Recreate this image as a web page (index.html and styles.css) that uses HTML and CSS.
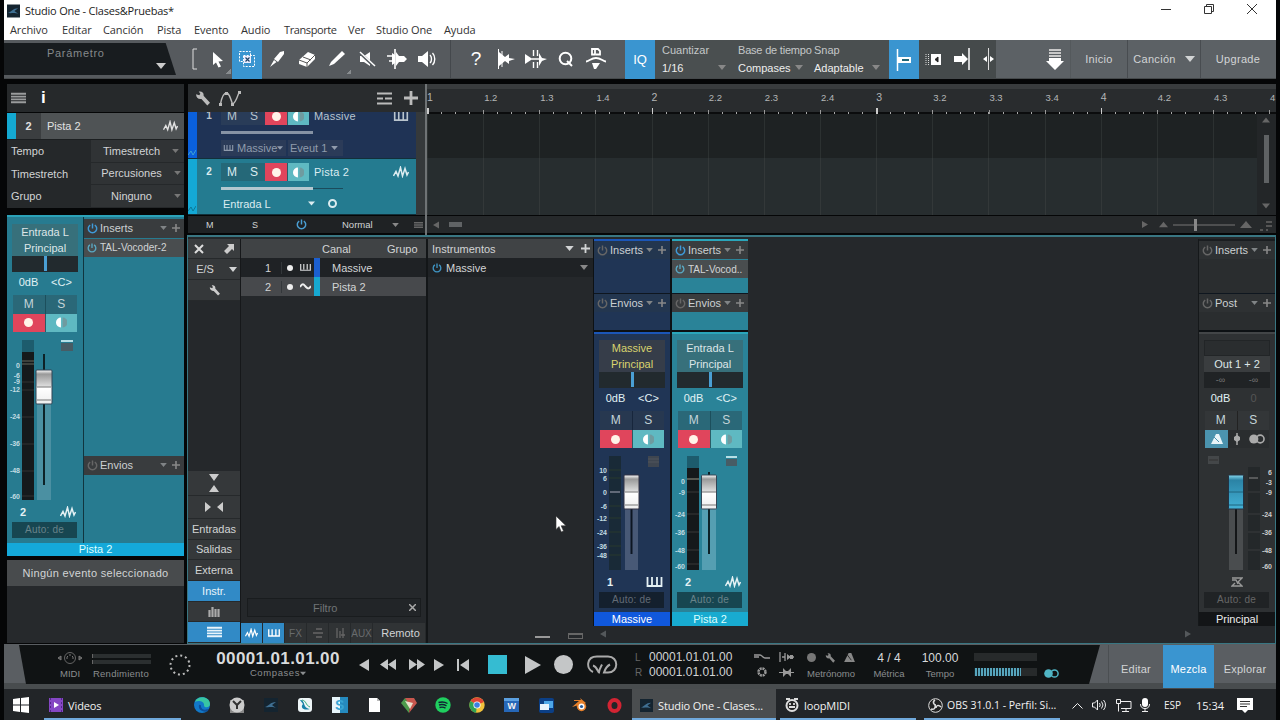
FILE: index.html
```html
<!DOCTYPE html>
<html lang="es">
<head>
    <meta charset="UTF-8">
    <meta name="viewport" content="width=device-width, initial-scale=1.0">
    <title>Studio One - Clases&amp;Pruebas*</title>
    <link rel="stylesheet" href="styles.css">
</head>
<body>
    <!-- shared icons -->
    <svg class="defs" width="0" height="0">
        <defs>
            <linearGradient id="cap" x1="0" y1="0" x2="0" y2="1">
                <stop offset="0" stop-color="#fff"/>
                <stop offset="0.12" stop-color="#999"/>
                <stop offset="0.48" stop-color="#ddd"/>
                <stop offset="0.52" stop-color="#fff"/>
                <stop offset="1" stop-color="#eee"/>
            </linearGradient>
            <linearGradient id="capBlue" x1="0" y1="0" x2="0" y2="1">
                <stop offset="0" stop-color="#8adcf0"/>
                <stop offset="0.15" stop-color="#2b83a5"/>
                <stop offset="1" stop-color="#43b1d6"/>
            </linearGradient>
        </defs>
        <symbol id="down" viewBox="0 0 10 6"><path d="M0 0h10L5 6z" fill="currentColor"/></symbol>
        <symbol id="up" viewBox="0 0 10 6"><path d="M0 6h10L5 0z" fill="currentColor"/></symbol>
        <symbol id="left" viewBox="0 0 10 12"><path d="M10 0v12L0 6z" fill="currentColor"/></symbol>
        <symbol id="right" viewBox="0 0 10 12"><path d="M0 0v12L10 6z" fill="currentColor"/></symbol>
        <symbol id="plus" viewBox="0 0 10 10"><path d="M5 0v10M0 5h10" stroke="currentColor" stroke-width="2"/></symbol>
        <symbol id="menu" viewBox="0 0 16 12"><path d="M0 1.5h16M0 4.5h16M0 7.5h16M0 10.5h16" stroke="currentColor" stroke-width="2"/></symbol>
        <symbol id="power" viewBox="0 0 12 12"><path d="M3.5 2.2a4.6 4.6 0 1 0 5 0M6 0.5v5.5" fill="none" stroke="currentColor" stroke-width="1.6"/></symbol>
        <symbol id="wave" viewBox="0 0 16 12"><path d="M0.500 10L3 5.500 5 10 7.500 1.500 9.500 10 12 2.500 14 9l1.500-3" fill="none" stroke="currentColor" stroke-width="1.500"/></symbol>
        <symbol id="keys" viewBox="0 0 16 10"><path d="M1 0v9h14V0M5.500 0v8M10.500 0v8" fill="none" stroke="currentColor" stroke-width="1.800"/></symbol>
        <symbol id="wrench" viewBox="0 0 14 14"><path d="M1 3l3 1 1-1.500L3.500 0.500c3-.6 5 1 4.500 4L14 11l-2.500 2.500L6 7.500C3 8 1 6 1 3z" fill="currentColor"/></symbol>
        <symbol id="half" viewBox="0 0 10 10"><path d="M4.500 0.500v9a4.500 4.500 0 0 1 0-9z" fill="#fff"/><path d="M6 .5v9a4.500 4.500 0 0 0 0-9z" fill="#6f9ba0"/></symbol>
        <symbol id="s1" viewBox="0 0 14 14"><path d="M0 0h14v14H0z" fill="#142430"/><path d="M1 9c4-1 5-5 11-5L8 7l4 3c-4-2-7 0-11-1z" fill="#3f6f92"/></symbol>
        <symbol id="stereo" viewBox="0 0 15 9"><circle cx="4.500" cy="4.500" r="4.300" fill="currentColor"/><circle cx="10.500" cy="4.500" r="3.600" fill="none" stroke="currentColor" stroke-width="1.500"/></symbol>
    </svg>

    <div class="app">
        <header class="titlebar">
            <svg width="13" height="14"><use href="#s1"/></svg>
            <span>Studio One - Clases&amp;Pruebas*</span>
            <div class="window-buttons">
                <svg width="10" height="10" viewBox="0 0 10 10"><path d="M0 5.500h10"/></svg>
                <svg width="10" height="10" viewBox="0 0 10 10"><path d="M.5 2.500h7v7h-7zM2.500 2.500v-2h7v7h-2"/></svg>
                <svg width="10" height="10" viewBox="0 0 10 10"><path d="M0 0l10 10M10 0L0 10"/></svg>
            </div>
        </header>
        <nav class="menubar">
            <span class="m1">Archivo</span><span class="m2">Editar</span><span class="m3">Canción</span><span class="m4">Pista</span><span class="m5">Evento</span><span class="m6">Audio</span><span class="m7">Transporte</span><span class="m8">Ver</span><span class="m9">Studio One</span><span>Ayuda</span>
        </nav>

        <!-- toolbar -->
        <div class="toolbar">
            <div class="param"><span>Parámetro</span><svg width="10" height="6"><use href="#down"/></svg></div>
            <div class="tools">
                <svg class="bracket" width="6" height="22" viewBox="0 0 6 22"><path d="M5 1H1v20h4" fill="none" stroke="#ddd"/></svg>
                <div class="tool corner"><svg width="18" height="20" viewBox="0 0 18 20"><path d="M5 3l10 9-4.500.5 2.500 5-2.500 1-2.500-5L5 16z" fill="#fff"/></svg></div>
                <div class="tool on"><svg width="18" height="18" viewBox="0 0 18 18"><path d="M1.500 1.500h11v10h-11zM5.500 5.500h11v11h-11z" fill="none" stroke="#fff" stroke-dasharray="2 1.200"/><path d="M6 6h7v7H6z" fill="#eef"/><path d="M7.500 7.500l4 4m0-4l-4 4" stroke="#246" stroke-width="1.200"/></svg></div>
                <div class="tool"><svg width="16" height="18" viewBox="0 0 16 18"><path d="M11 2l4-1v3l-6 8-4-3zM5 10l2.500 2L1 17z" fill="#fff"/></svg></div>
                <div class="tool"><svg width="18" height="16" viewBox="0 0 18 16"><path d="M1 9l9-8 7 3v4l-8 8-8-3z" fill="#fff"/><path d="M1 9l8 3 8-8M9 12v4M5 6l8 3" fill="none" stroke="#555"/></svg></div>
                <div class="tool corner"><svg width="16" height="16" viewBox="0 0 16 16"><path d="M13 0l3 3L5 13 0 15l2-4z" fill="#fff"/></svg></div>
                <div class="tool"><svg width="18" height="17" viewBox="0 0 18 17"><path d="M2 5h4l6-4v14l-6-4H2z" fill="#fff"/><path d="M1 1l16 15" stroke="#555a5f" stroke-width="3"/><path d="M2 1l15 14" stroke="#fff" stroke-width="1.500"/></svg></div>
                <div class="tool"><svg width="20" height="22" viewBox="0 0 20 22"><path d="M0 8h5M2 13h4M8 1v20" stroke="#fff" stroke-width="1.600"/><path d="M5 5l3 2v8l-3 2zM9 4l3 4h5l3 3-3 3h-5l-3 4z" fill="#fff"/></svg></div>
                <div class="tool"><svg width="18" height="16" viewBox="0 0 18 16"><path d="M0 5h4l6-5v16l-6-5H0z" fill="#fff"/><path d="M12 4c2 2 2 6 0 8M14.500 2c3 3 3 9 0 12" fill="none" stroke="#fff" stroke-width="1.400"/></svg></div>
            </div>
            <div class="tools second">
                <div class="tool help">?</div>
                <div class="tool"><svg width="18" height="20" viewBox="0 0 18 20"><path d="M1.500 0v20M5 2v16" stroke="#fff"/><path d="M2 3l6 5 4-3v4l6 1-6 2v3l-4-3-6 5z" fill="#fff"/></svg></div>
                <div class="tool"><svg width="22" height="18" viewBox="0 0 22 18"><path d="M0 4l6 4v2l-6 4zM14 3l3 5 5 1-5 2-3 5z" fill="#fff"/><path d="M6 9h9M8.500 0v6M12.500 0v6M8.500 12v6M12.500 12v6" stroke="#fff" stroke-width="1.400"/></svg></div>
                <div class="tool"><svg width="16" height="16" viewBox="0 0 16 16"><circle cx="7.500" cy="7.500" r="5.800" fill="none" stroke="#fff" stroke-width="2"/><path d="M9 10l5 5" stroke="#fff" stroke-width="2"/></svg></div>
                <div class="tool"><svg width="22" height="22" viewBox="0 0 22 22"><path d="M7 6.500V1h3v5.500zM10 1h3l2 2v3.500h-4M1 13.500c3 0 5-3.500 10-3.500s7 3.500 10 3.500" fill="none" stroke="#fff" stroke-width="1.800"/><path d="M7 15h8l-4 6H9z" fill="#fff"/></svg></div>
            </div>
            <div class="tool on iq">IQ</div>
            <div class="quant">
                <div class="q1"><label>Cuantizar</label><p>1/16<svg width="8" height="5"><use href="#down"/></svg></p></div>
                <div class="q2"><label>Base de tiempo</label><p>Compases<svg width="8" height="5"><use href="#down"/></svg></p></div>
                <div class="q3"><label>Snap</label><p>Adaptable<svg width="8" height="5"><use href="#down"/></svg></p></div>
            </div>
            <div class="tool on"><svg width="16" height="22" viewBox="0 0 16 22"><path d="M1.500 0v22" stroke="#fff" stroke-width="1.500"/><path d="M2 8h13v6H2z" fill="#fff"/><path d="M6 10h7v2H6z" fill="#267"/></svg></div>
            <div class="snaps">
                <svg width="16" height="13" viewBox="0 0 16 13"><path d="M1 1v11M3.500 1v11" stroke="#ddd" stroke-dasharray="1 1"/><path d="M6 1h10v11H6z" fill="#fff"/><path d="M13 4v5l-3-2.500z" fill="#222" stroke="#222"/></svg>
                <svg width="16" height="22" viewBox="0 0 16 22"><path d="M0 8h8V5l6 6-6 6v-3H0z" fill="#fff"/><path d="M15 0v22" stroke="#fff" stroke-width="1.500"/></svg>
                <svg width="11" height="22" viewBox="0 0 11 22"><path d="M5.500 0v22" stroke="#ddd"/><path d="M4 8v6l-4-3zM7 8v6l4-3z" fill="#fff"/></svg>
            </div>
            <div class="pages">
                <div class="drop"><svg width="18" height="21" viewBox="0 0 18 21"><path d="M3 1h12M3 4h12M3 7h12" stroke="#c8c8c8" stroke-width="2"/><path d="M3 9h12v3h3l-9 9-9-9h3z" fill="#fff"/></svg></div>
                <div class="page p1">Inicio</div>
                <div class="page p2">Canción<svg width="10" height="6"><use href="#down"/></svg></div>
                <div class="page p3">Upgrade</div>
            </div>
        </div>

        <div class="main">
            <!-- inspector -->
            <aside class="inspector">
                <div class="insp-head"><svg width="15" height="12"><use href="#menu"/></svg><b>i</b></div>
                <div class="insp-track"><i></i><b>2</b><span>Pista 2</span><svg width="15" height="12"><use href="#wave"/></svg></div>
                <div class="insp-row"><label>Tempo</label><p>Timestretch<svg width="7" height="4"><use href="#down"/></svg></p></div>
                <div class="insp-row"><label>Timestretch</label><p>Percusiones<svg width="7" height="4"><use href="#down"/></svg></p></div>
                <div class="insp-row"><label>Grupo</label><p>Ninguno<svg width="7" height="4"><use href="#down"/></svg></p></div>
                <div class="insp-channel">
                    <div class="strip-body">
                        <div class="route"><span>Entrada L</span><span>Principal</span></div>
                        <div class="pan"><i></i></div>
                        <div class="vals"><span>0dB</span><span>&lt;C&gt;</span></div>
                        <div class="ms"><span>M</span><span>S</span></div>
                        <div class="arm"><span class="rec"><i></i></span><span class="mon"><svg width="11" height="11"><use href="#half"/></svg></span></div>
                        <svg class="fader" width="76" height="171" viewBox="0 0 76 171">
                            <path d="M15 8h12v12H15z" fill="#1d5c6d"/><path d="M15 20h12v148H15z" fill="#15191b"/>
                            <path d="M15 29h12M15 32h12" stroke="#8a8a7a" stroke-width=".7"/>
                            <path d="M15 50h12M15 58h12M15 85h12M15 112h12M15 139h12M15 164h12" stroke="#333"/>
                            <path d="M30 72h14v96H30z" fill="#4b90a2"/><path d="M37 22v131" stroke="#0d2227" stroke-width="2"/>
                            <rect x="29" y="38" width="16" height="34" rx="1" fill="url(#cap)" stroke="#345"/><path d="M30 55h14M30 68h14" stroke="#777"/>
                            <path d="M54 11h12v8H54z" fill="#475c65"/><path d="M54 9h12" stroke="#b5dfe6" stroke-width="2"/>
                            <g class="scale"><text x="13" y="36">0</text><text x="13" y="46">-6</text><text x="13" y="52">-9</text><text x="13" y="60">-12</text><text x="13" y="87">-24</text><text x="13" y="114">-36</text><text x="13" y="141">-48</text><text x="13" y="167">-60</text></g>
                        </svg>
                        <div class="num"><b>2</b><svg width="16" height="12"><use href="#wave"/></svg></div>
                        <div class="auto">Auto: de</div>
                    </div>
                    <div class="fx">
                        <div class="fx-head on"><svg width="11" height="11"><use href="#power"/></svg><span>Inserts</span><svg width="7" height="4"><use href="#down"/></svg><svg width="8" height="8"><use href="#plus"/></svg></div>
                        <div class="fx-slot"><svg width="10" height="10"><use href="#power"/></svg><span>TAL-Vocoder-2</span></div>
                        <div class="fx-head sends"><svg width="11" height="11"><use href="#power"/></svg><span>Envios</span><svg width="7" height="4"><use href="#down"/></svg><svg width="8" height="8"><use href="#plus"/></svg></div>
                    </div>
                </div>
                <div class="insp-name">Pista 2</div>
                <div class="insp-event">Ningún evento seleccionado</div>
                <div class="insp-empty"></div>
            </aside>

            <div class="work">
                <!-- track list and timeline -->
                <section class="arrange">
                    <div class="tracks">
                        <div class="tracks-head">
                            <svg width="15" height="15"><use href="#wrench"/></svg>
                            <svg width="22" height="15" viewBox="0 0 22 15"><path d="M1.500 13C3 5 5 2 7.500 2s4 5 6 11C16 13 18 7 20 1.500" fill="none" stroke="#bbb" stroke-width="1.400"/><path d="M0 12h3v3H0zM19 0h3v3h-3zM6 1h3v3H6zM12 12h3v3h-3z" fill="#bbb"/></svg>
                            <svg class="push" width="15" height="13" viewBox="0 0 15 13"><path d="M0 1.500h15M0 6.500h6M8 6.500h7M0 11.500h15" stroke="#bbb" stroke-width="2"/></svg>
                            <svg width="14" height="14"><use href="#plus"/></svg>
                        </div>
                        <div class="track-view">
                            <div class="track midi">
                                <div class="color"><svg width="8" height="7" viewBox="0 0 8 7"><path d="M0 6l3-4 2 4 3-5" fill="none" stroke="#3fa0d0"/></svg></div>
                                <b>1</b>
                                <div class="track-body">
                                    <div class="track-top"><div class="btns"><span>M</span><span>S</span><span class="rec"><i></i></span><span class="mon"><svg width="11" height="11"><use href="#half"/></svg></span></div><span class="name">Massive</span><svg width="16" height="9"><use href="#keys"/></svg></div>
                                    <div class="rail"><i></i></div>
                                    <div class="track-in"><p class="in1"><svg width="11" height="6"><use href="#keys"/></svg><span>Massive</span><svg width="6" height="4"><use href="#down"/></svg></p><p class="in2"><span>Eveut 1</span><svg width="7" height="4"><use href="#down"/></svg></p></div>
                                </div>
                            </div>
                            <div class="track audio">
                                <div class="color"><svg width="8" height="7" viewBox="0 0 8 7"><path d="M0 6l3-4 2 4 3-5" fill="none" stroke="#0d7896"/></svg></div>
                                <b>2</b>
                                <div class="track-body">
                                    <div class="track-top"><div class="btns"><span>M</span><span>S</span><span class="rec"><i></i></span><span class="mon"><svg width="11" height="11"><use href="#half"/></svg></span></div><span class="name">Pista 2</span><svg width="16" height="12"><use href="#wave"/></svg></div>
                                    <div class="rail"><i></i></div>
                                    <div class="track-in"><p class="in3"><span>Entrada L</span><svg width="7" height="5"><use href="#down"/></svg></p><i class="ring"></i></div>
                                </div>
                            </div>
                        </div>
                        <div class="tracks-foot"><span>M</span><span>S</span><svg width="11" height="11"><use href="#power"/></svg><span class="mode">Normal</span><svg width="7" height="4"><use href="#down"/></svg><svg width="9" height="8"><use href="#menu"/></svg></div>
                    </div>
                    <div class="timeline">
                        <div class="ruler">
                            <div class="marks"><b>1</b><span>1.2</span><span>1.3</span><span>1.4</span><b>2</b><span>2.2</span><span>2.3</span><span>2.4</span><b>3</b><span>3.2</span><span>3.3</span><span>3.4</span><b>4</b><span>4.2</span><span>4.3</span><span>4</span></div>
                            <div class="ticks"></div>
                        </div>
                        <div class="lanes-row">
                            <div class="lanes"><div class="lane l1"></div><div class="lane l2"></div></div>
                            <div class="vscroll"><svg width="8" height="6"><use href="#up"/></svg><i></i><svg width="8" height="6"><use href="#down"/></svg></div>
                        </div>
                        <div class="hscroll">
                            <svg width="6" height="8"><use href="#left"/></svg><i class="thumb"></i>
                            <svg class="push" width="6" height="9"><use href="#right"/></svg>
                            <svg class="z1" width="9" height="7"><use href="#up"/></svg>
                            <svg width="62" height="12" viewBox="0 0 62 12"><path d="M0 6h62" stroke="#777"/><path d="M22.500 0v12" stroke="#888" stroke-width="3"/></svg>
                            <svg width="12" height="9"><use href="#up"/></svg>
                            <svg width="12" height="12" viewBox="0 0 12 12"><path d="M0 11h3M6 3h6M6 7h6M6 11h2" stroke="#555" stroke-width="2"/></svg>
                        </div>
                    </div>
                </section>

                <!-- console -->
                <section class="console">
                    <div class="con-tools">
                        <div class="ct head"><svg width="10" height="10" viewBox="0 0 10 10"><path d="M1 1l8 8M9 1L1 9" stroke="#ddd" stroke-width="2"/></svg><svg width="10" height="10" viewBox="0 0 10 10"><path d="M3 0h7v7L8 5l-5 5-3-3 5-5z" fill="#ccc"/></svg></div>
                        <div class="ct io"><span>E/S</span><svg width="8" height="5"><use href="#down"/></svg></div>
                        <div class="ct wr"><svg width="11" height="11"><use href="#wrench"/></svg></div>
                        <div class="fill"></div>
                        <div class="ct tall"><svg width="10" height="18" viewBox="0 0 10 18"><path d="M0 0h10L5 7zM0 18h10L5 11z" fill="#ccc"/></svg></div>
                        <div class="ct mid"><svg width="18" height="10" viewBox="0 0 18 10"><path d="M0 0v10l6-5zM18 0v10l-6-5z" fill="#ccc"/></svg></div>
                        <div class="ct">Entradas</div>
                        <div class="ct">Salidas</div>
                        <div class="ct">Externa</div>
                        <div class="ct on">Instr.</div>
                        <div class="ct"><svg width="12" height="11" viewBox="0 0 12 11"><path d="M1.500 4v7M4.500 1v10M7.500 3v8M10.500 3v8" stroke="#aaa" stroke-width="2.200"/></svg></div>
                        <div class="ct on"><svg width="15" height="12"><use href="#menu"/></svg></div>
                    </div>
                    <div class="chan-list">
                        <div class="cl-head"><span class="c1">Canal</span><span>Grupo</span></div>
                        <div class="cl-row"><span class="n">1</span><i class="dot"></i><svg width="11" height="7"><use href="#keys"/></svg><i class="sw blue"></i><span>Massive</span></div>
                        <div class="cl-row sel"><span class="n">2</span><i class="dot"></i><svg width="11" height="7" viewBox="0 0 11 7"><path d="M0 4C3-1 4 2 6 4s3 2 5-1" fill="none" stroke="#eee" stroke-width="2"/></svg><i class="sw cyan"></i><span>Pista 2</span></div>
                        <div class="fill"></div>
                        <div class="filter"><span>Filtro</span><svg width="7" height="7" viewBox="0 0 7 7"><path d="M0 0l7 7M7 0L0 7" stroke="#aaa" stroke-width="1.500"/></svg></div>
                        <div class="kinds">
                            <span class="on"><svg width="13" height="10"><use href="#wave"/></svg></span><span class="on"><svg width="12" height="8"><use href="#keys"/></svg></span><span>FX</span>
                            <span><svg width="10" height="10" viewBox="0 0 10 10"><path d="M0 5h10M3 1h6M3 9h6" stroke="#666" stroke-width="1.300"/></svg></span>
                            <span><svg width="10" height="10" viewBox="0 0 10 10"><path d="M2 0v10M5 3v7M8 0v10M6 7h4" stroke="#666" stroke-width="1.300"/></svg></span>
                            <span>AUX</span><span class="remote">Remoto</span>
                        </div>
                    </div>
                    <div class="instruments">
                        <div class="in-head"><span>Instrumentos</span><svg width="9" height="5"><use href="#down"/></svg><svg width="9" height="9"><use href="#plus"/></svg></div>
                        <div class="in-row"><svg width="10" height="10"><use href="#power"/></svg><span>Massive</span><svg width="8" height="5"><use href="#down"/></svg></div>
                        <div class="fill"></div>
                        <div class="in-foot"><i></i><em></em></div>
                    </div>
                    <div class="mixer">
                        <div class="strips">
                            <div class="strip blue">
                                <div class="fx">
                                    <div class="fx-head"><svg width="11" height="11"><use href="#power"/></svg><span>Inserts</span><svg width="7" height="4"><use href="#down"/></svg><svg width="8" height="8"><use href="#plus"/></svg></div>
                                    <div class="fx-head sends"><svg width="11" height="11"><use href="#power"/></svg><span>Envios</span><svg width="7" height="4"><use href="#down"/></svg><svg width="8" height="8"><use href="#plus"/></svg></div>
                                </div>
                                <div class="strip-body">
                                    <div class="route"><span>Massive</span><span>Principal</span></div>
                                    <div class="pan"><i></i></div>
                                    <div class="vals"><span>0dB</span><span>&lt;C&gt;</span></div>
                                    <div class="ms"><span>M</span><span>S</span></div>
                                    <div class="arm"><span class="rec"><i></i></span><span class="mon"><svg width="11" height="11"><use href="#half"/></svg></span></div>
                                    <svg class="fader" width="76" height="125" viewBox="0 0 76 125">
                                        <path d="M15 8h12v114H15z" fill="#192a37"/>
                                        <path d="M15 22h12M15 30h12M15 58h12M15 70h12M15 84h12M15 98h12M15 107h12" stroke="#28392f"/><path d="M16 44h10" stroke="#aab"/>
                                        <path d="M31 61h13v61H31z" fill="#485976"/><path d="M37.500 58v48" stroke="#0d1622" stroke-width="2"/>
                                        <rect x="30" y="27" width="15" height="34" rx="1" fill="url(#cap)" stroke="#334"/><path d="M31 44h13M31 57h13" stroke="#777"/>
                                        <path d="M54 8h11v11H54z" fill="#3f4650"/><path d="M54 11h11M54 14h11" stroke="#50555c"/>
                                        <g class="scale"><text x="13" y="25">10</text><text x="13" y="33">6</text><text x="13" y="47">0</text><text x="13" y="61">-6</text><text x="13" y="73">-12</text><text x="13" y="87">-24</text><text x="13" y="101">-36</text><text x="13" y="110">-48</text></g>
                                    </svg>
                                    <div class="num"><b>1</b><svg width="17" height="10"><use href="#keys"/></svg></div>
                                    <div class="auto">Auto: de</div>
                                </div>
                                <div class="strip-name">Massive</div>
                            </div>
                            <div class="strip teal">
                                <div class="fx">
                                    <div class="fx-head on"><svg width="11" height="11"><use href="#power"/></svg><span>Inserts</span><svg width="7" height="4"><use href="#down"/></svg><svg width="8" height="8"><use href="#plus"/></svg></div>
                                    <div class="fx-slot"><svg width="10" height="10"><use href="#power"/></svg><span>TAL-Vocod..</span></div>
                                    <div class="fx-head sends"><svg width="11" height="11"><use href="#power"/></svg><span>Envios</span><svg width="7" height="4"><use href="#down"/></svg><svg width="8" height="8"><use href="#plus"/></svg></div>
                                </div>
                                <div class="strip-body">
                                    <div class="route"><span>Entrada L</span><span>Principal</span></div>
                                    <div class="pan"><i></i></div>
                                    <div class="vals"><span>0dB</span><span>&lt;C&gt;</span></div>
                                    <div class="ms"><span>M</span><span>S</span></div>
                                    <div class="arm"><span class="rec"><i></i></span><span class="mon"><svg width="11" height="11"><use href="#half"/></svg></span></div>
                                    <svg class="fader" width="76" height="125" viewBox="0 0 76 125">
                                        <path d="M15 8h12v12H15z" fill="#1d5c6d"/><path d="M15 20h12v102H15z" fill="#15191b"/>
                                        <path d="M15 31h12" stroke="#9a9a8a"/><path d="M15 44h12M15 66h12M15 84h12M15 102h12M15 116h12" stroke="#393939"/>
                                        <path d="M30 61h14v61H30z" fill="#559fb2"/><path d="M37 24v82" stroke="#0d2227" stroke-width="2"/>
                                        <rect x="29.500" y="27" width="15" height="34" rx="1" fill="url(#cap)" stroke="#345"/><path d="M30 44h14M30 57h14" stroke="#777"/>
                                        <path d="M54 11h11v7H54z" fill="#475c65"/><path d="M54 9h11" stroke="#b5dfe6" stroke-width="2"/>
                                        <g class="scale"><text x="13" y="36">0</text><text x="13" y="47">-9</text><text x="13" y="69">-24</text><text x="13" y="87">-36</text><text x="13" y="105">-48</text><text x="13" y="121">-60</text></g>
                                    </svg>
                                    <div class="num"><b>2</b><svg width="16" height="12"><use href="#wave"/></svg></div>
                                    <div class="auto">Auto: de</div>
                                </div>
                                <div class="strip-name">Pista 2</div>
                            </div>
                            <div class="fill"></div>
                            <div class="strip master">
                                <div class="fx">
                                    <div class="fx-head"><svg width="11" height="11"><use href="#power"/></svg><span>Inserts</span><svg width="7" height="4"><use href="#down"/></svg><svg width="8" height="8"><use href="#plus"/></svg></div>
                                    <div class="fx-head sends"><svg width="11" height="11"><use href="#power"/></svg><span>Post</span><svg width="7" height="4"><use href="#down"/></svg><svg width="8" height="8"><use href="#plus"/></svg></div>
                                </div>
                                <div class="strip-body">
                                    <div class="route"><span></span><span>Out 1 + 2</span></div>
                                    <div class="pan peaks"><span>-∞</span><span>-∞</span></div>
                                    <div class="vals"><span>0dB</span><span class="dim">0</span></div>
                                    <div class="ms"><span>M</span><span>S</span></div>
                                    <div class="arm">
                                        <span class="metro"><svg width="12" height="10" viewBox="0 0 12 10"><path d="M5 0h3l4 10H0z" fill="#e8f4f8"/><path d="M1 1l7 7" stroke="#4d93ad"/></svg></span>
                                        <span class="pin"><svg width="6" height="12" viewBox="0 0 6 12"><path d="M3 0v12" stroke="#aaa" stroke-width="1.500"/><path d="M0 4l3-2 3 2v3L3 9 0 7z" fill="#aaa"/></svg></span>
                                        <span><svg width="16" height="10"><use href="#stereo"/></svg></span>
                                    </div>
                                    <svg class="fader" width="76" height="125" viewBox="0 0 76 125">
                                        <path d="M9 8h11v8H9z" fill="#444749"/><path d="M10 12h9" stroke="#333"/>
                                        <path d="M49 19h12v103H49z" fill="#24282a"/><path d="M49 44h12M49 66h12M49 84h12M49 102h12" stroke="#383b3d"/><path d="M50 30h9" stroke="#888"/>
                                        <path d="M30 61h14v61H30z" fill="#4a4d4f"/><path d="M37 61v45" stroke="#141618" stroke-width="2"/>
                                        <rect x="29.500" y="27" width="15" height="34" rx="1" fill="url(#capBlue)" stroke="#234"/><path d="M30 44h14M30 57h14" stroke="#1f647e"/>
                                        <g class="scale"><text x="73" y="27">6</text><text x="73" y="37">-3</text><text x="73" y="47">-9</text><text x="73" y="69">-24</text><text x="73" y="87">-36</text><text x="73" y="105">-48</text><text x="73" y="121">-60</text></g>
                                    </svg>
                                    <div class="num mid"><svg width="12" height="10" viewBox="0 0 12 10"><path d="M1 1h10L7 5l4 4H1l3-3M1 3h4l2 4" fill="none" stroke="#999" stroke-width="1.300"/></svg></div>
                                    <div class="auto">Auto: de</div>
                                </div>
                                <div class="strip-name">Principal</div>
                            </div>
                        </div>
                        <div class="mix-scroll"><svg width="6" height="8"><use href="#left"/></svg><svg width="6" height="8"><use href="#right"/></svg></div>
                    </div>
                </section>
            </div>
        </div>

        <!-- transport -->
        <div class="transport">
            <div class="tp">
                <div class="midi"><svg width="24" height="14" viewBox="0 0 24 14"><circle cx="12" cy="7" r="5.500" fill="none" stroke="#666"/><path d="M8 7h2M14 7h2M12 3v2M9 5l1 1M15 5l-1 1M3 5v4L0 7zM21 5v4l3-2z" fill="#555" stroke="#777"/></svg><span>MIDI</span></div>
                <div class="perf"><i></i><i></i><span>Rendimiento</span></div>
                <svg class="spin" width="22" height="22" viewBox="0 0 22 22"><circle cx="11" cy="11" r="9.500" fill="none" stroke="#bbb" stroke-width="2" stroke-dasharray="2 2.970"/></svg>
                <div class="time"><b>00001.01.01.00</b><span>Compases<svg width="6" height="5"><use href="#down"/></svg></span></div>
                <div class="ctl">
                    <svg class="k1" width="10" height="12"><use href="#left"/></svg>
                    <svg class="k2" width="16" height="11" viewBox="0 0 16 11"><path d="M8 0v11L0 5.500zM16 0v11L8 5.500z"/></svg>
                    <svg class="k3" width="16" height="11" viewBox="0 0 16 11"><path d="M0 0v11l8-5.500zM8 0v11l8-5.500z"/></svg>
                    <svg class="k4" width="10" height="12"><use href="#right"/></svg>
                    <svg class="k5" width="12" height="12" viewBox="0 0 12 12"><path d="M0 0h2v12H0zM12 0v12L3 6z"/></svg>
                    <svg class="k6" width="19" height="19" viewBox="0 0 19 19"><path d="M0 0h19v19H0z" fill="#35bcd2"/></svg>
                    <svg class="k7" width="16" height="18" viewBox="0 0 16 18"><path d="M0 0v18l16-9z"/></svg>
                    <svg class="k8" width="19" height="19" viewBox="0 0 19 19"><circle cx="9.500" cy="9.500" r="9.500"/></svg>
                    <svg width="31" height="20" viewBox="0 0 31 20"><path d="M6 17C-1 14-1 1.500 10 1.500h11c11 0 11 16 0 16h-4c1-3 2-6 6-8M6 10.500c4 1 5 7 6 7 0-3 2-6 3-8" fill="none" stroke="#aaa" stroke-width="2"/></svg>
                </div>
                <div class="loc"><p><em>L</em>00001.01.01.00</p><p><em>R</em>00001.01.01.00</p></div>
                <div class="opts">
                    <svg width="16" height="8" viewBox="0 0 16 8"><path d="M0 2h6c2 0 3 3 5 3h5M0 4h5" fill="none" stroke="#999" stroke-width="1.300"/></svg>
                    <svg width="15" height="10" viewBox="0 0 15 10"><path d="M1 0v10M3 5h3M6 1v8M8 5h7" stroke="#999" stroke-width="1.300"/><path d="M8 2l4 3-4 3zM11 3h3v4h-3z" fill="#999"/></svg>
                    <svg width="12" height="10" viewBox="0 0 12 10"><circle cx="6" cy="5" r="3.500" fill="none" stroke="#999" stroke-width="2.500" stroke-dasharray="2 .75"/></svg>
                    <svg width="15" height="9" viewBox="0 0 15 9"><path d="M0 4.500h15" stroke="#999"/><path d="M4 0l3 3h2l3-3v9L9 6H7L4 9z" fill="#999"/></svg>
                </div>
                <div class="metro-box"><div><svg width="9" height="9" viewBox="0 0 9 9"><circle cx="4.500" cy="4.500" r="4.500" fill="#777"/></svg><svg width="10" height="10"><use href="#wrench"/></svg><svg width="11" height="9" viewBox="0 0 12 10"><path d="M5 0h3l4 10H0z" fill="#888"/><path d="M2 0l6 8" stroke="#222"/></svg></div><span>Metrónomo</span></div>
                <div class="val v1"><b>4 / 4</b><span>Métrica</span></div>
                <div class="val v2"><b>100.00</b><span>Tempo</span></div>
                <div class="levels"><i></i><em></em></div>
                <svg class="st" width="15" height="9"><use href="#stereo"/></svg>
            </div>
            <div class="views"><span class="e1">Editar</span><span class="e2">Mezcla</span><span class="e3">Explorar</span></div>
        </div>

        <!-- windows taskbar -->
        <footer class="taskbar">
            <svg class="win" width="16" height="16" viewBox="0 0 16 16"><path d="M0 2l7-1v6.500H0zM8 1l8-1v7.500H8zM0 8.500h7V15l-7-1zM8 8.500h8V16l-8-1z" fill="#fff"/></svg>
            <div class="task videos"><svg width="14" height="14" viewBox="0 0 14 14"><path d="M0 0h14v14H0z" fill="#8547c4"/><path d="M5 4v6l5-3z" fill="#fff"/><path d="M1.500 0v14M12.500 0v14" stroke="#54258c" stroke-dasharray="2 2"/></svg><span>Videos</span></div>
            <div class="quick">
                <span><svg width="16" height="16" viewBox="0 0 16 16"><circle cx="8" cy="8" r="8" fill="#1278c8"/><path d="M1 5C3-2 16-1 16 7c0 4-5 4-6 2 1-5-6-6-9-4z" fill="#38c6a3"/><path d="M6 8c-1 4 3 7 8 5" fill="none" stroke="#0c4f9a" stroke-width="2"/></svg></span>
                <span><svg width="16" height="16" viewBox="0 0 16 16"><path d="M1 3h14v13H1z" fill="#888"/><circle cx="8" cy="8" r="7.500" fill="#ccc"/><path d="M4 4l4 4 4-4M8 8v4" fill="none" stroke="#333" stroke-width="2"/></svg></span>
                <span><svg width="14" height="14"><use href="#s1"/></svg></span>
                <span><svg width="14" height="14" viewBox="0 0 14 14"><rect width="14" height="14" rx="3" fill="#eef5f7"/><path d="M2 2c6 0 2 8 10 9-7 2-10-2-7-5z" fill="#1681a8"/><path d="M4 2c5 1 3 5 8 7" stroke="#3a7" fill="none"/></svg></span>
                <span class="sb">S</span>
                <span><svg width="11" height="14" viewBox="0 0 11 14"><path d="M0 0h8l3 3v11H0z" fill="#fff"/><path d="M8 0v3h3" fill="#bbb"/></svg></span>
                <span><svg width="16" height="15" viewBox="0 0 16 15"><path d="M0 5l4-5 5 7-1 8z" fill="#4d9a4c"/><path d="M4 0h9l3 5-8 10 1-7z" fill="#c8574e"/><path d="M4 3l5 8 3-6z" fill="#e8e0cc"/></svg></span>
                <span><svg width="16" height="16" viewBox="0 0 16 16"><circle cx="8" cy="8" r="7.700" fill="#1fcf5f"/><path d="M3.500 5.500q5-1.500 9 1M4 8q4-1.200 7.500.8M4.500 10.500q3.500-1 6 .7" fill="none" stroke="#123" stroke-width="1.400"/></svg></span>
                <span><svg width="16" height="16" viewBox="0 0 16 16"><circle cx="8" cy="8" r="7.700" fill="#f2c23b"/><path d="M8 8L1.500 4A7.700 7.700 0 0 1 15 5z" fill="#df4637"/><path d="M8 8L1.500 4A7.700 7.700 0 0 0 7 15.700z" fill="#31a254"/><circle cx="8" cy="8" r="3.600" fill="#fff"/><circle cx="8" cy="8" r="2.800" fill="#3d7fe0"/></svg></span>
                <span class="wd"><i>W</i></span>
                <span><svg width="15" height="15" viewBox="0 0 15 15"><rect width="15" height="15" rx="2" fill="#0b3f86"/><path d="M5 3h9v7H5z" fill="#4ea7e8"/><path d="M1 6h9v6H1z" fill="#e8f2fb"/></svg></span>
                <span><svg width="16" height="14" viewBox="0 0 16 14"><path d="M0 9l7-6H2V2h7l-1-2 6 5z" fill="#e8812b"/><circle cx="9.500" cy="8.500" r="4.700" fill="#e8812b"/><circle cx="9.500" cy="8.500" r="3" fill="#fff"/><circle cx="9.500" cy="8.500" r="1.600" fill="#2a5c9a"/></svg></span>
                <span><svg width="15" height="15" viewBox="0 0 15 15"><ellipse cx="7.500" cy="7.500" rx="5" ry="5.500" fill="none" stroke="#d22433" stroke-width="4"/></svg></span>
            </div>
            <div class="task studio"><svg width="13" height="13"><use href="#s1"/></svg><span>Studio One - Clases...</span></div>
            <div class="task loop"><svg width="14" height="14" viewBox="0 0 14 14"><circle cx="7" cy="7.500" r="5.500" fill="#222" stroke="#ddd" stroke-width="2"/><path d="M1 1h4M9 1h4M4 9h6" stroke="#ddd" stroke-width="2"/><circle cx="5" cy="6" r="1" fill="#fff"/><circle cx="9" cy="6" r="1" fill="#fff"/></svg><span>loopMIDI</span></div>
            <div class="task obs"><svg width="15" height="15" viewBox="0 0 15 15"><circle cx="7.500" cy="7.500" r="6.800" fill="#222" stroke="#ddd"/><path d="M7 2c-3 2-1 5 1 5M13 9c-3-3-5-1-5 1M3 11c3 1 5-1 4-4" fill="none" stroke="#ddd" stroke-width="1.600"/></svg><span>OBS 31.0.1 - Perfil: Si...</span></div>
            <div class="tray">
                <svg class="t1" width="11" height="7" viewBox="0 0 11 7"><path d="M0.500 6.500l5-5 5 5"/></svg>
                <svg class="t2" width="14" height="12" viewBox="0 0 14 12"><path d="M.5 4h2l3-3v10l-3-3h-2zM7.500 4q1.500 2 0 4M9.500 2.500q3 3.500 0 7M11.500 1q4 5 0 10"/></svg>
                <svg class="t3" width="16" height="13" viewBox="0 0 16 13"><path d="M4 2.500h11v7H5M10 9.500v3M6 12.500h7M.5.5h4v4h-4zM2.500 5v7.500"/></svg>
                <svg class="t4" width="10" height="14" viewBox="0 0 10 14"><rect x="2" y="0" width="6" height="9" rx="3" fill="#fff" stroke="none"/><path d="M.5 6q0 4.500 4.500 4.500T9.500 6M5 10v3M2 13.500h6"/></svg>
                <span class="lang">ESP</span><span class="clock">15:34</span>
                <svg class="note" width="16" height="15" viewBox="0 0 16 15"><path d="M0 0h16v12h-5l-3 3-3-3H0z"/><path d="M3 3.500h10M3 6h10M3 8.500h7"/></svg>
            </div>
        </footer>
        <svg class="cursor" width="12" height="18" viewBox="0 0 12 18"><path d="M1 1v13.500l3-3 2.300 5.500 2.200-1-2.300-5.200H11z" fill="#fff" stroke="#333" stroke-width=".6"/></svg>
    </div>
</body>
</html>
```

FILE: styles.css
```css
* {
    box-sizing: border-box;
}
body {
    margin: 0;
    background: #000;
    font-family: "Liberation Sans", Arial, sans-serif;
    font-size: 11px;
    color: #d2d4d5;
    overflow: hidden;
}
p {
    margin: 0;
}
i, em {
    font-style: normal;
}
svg {
    display: block;
    flex: none;
}
.app {
    display: flex;
    position: relative;
    flex-direction: column;
    width: 1280px;
    height: 720px;
    padding: 0 4px;
    background: #050607;
    white-space: nowrap;
}
.fill {
    flex: 1;
}
.push {
    margin-left: auto;
}

/* window title and menu */
.titlebar {
    display: flex;
    align-items: center;
    height: 21px;
    padding-left: 3px;
    background: #fff;
    color: #222;
    font-family: "Open Sans", sans-serif;
    font-size: 11px;
}
.titlebar span {
    margin-left: 5px;
    letter-spacing: -0.22px;
}
.window-buttons {
    display: flex;
    gap: 33px;
    margin: -3px 19px 0 auto;
}
.window-buttons path {
    fill: none;
    stroke: #333;
}
.menubar {
    display: flex;
    height: 19px;
    padding-left: 6px;
    line-height: 18px;
    background: #fff;
    color: #333;
    font-family: "Open Sans", sans-serif;
    font-size: 11px;
    letter-spacing: -0.1px;
}
.m1 { width: 52px; }
.m2 { width: 41px; }
.m3 { width: 54px; }
.m4 { width: 37px; }
.m5 { width: 47px; }
.m6 { width: 43px; }
.m7 { width: 64px; letter-spacing: -0.4px; }
.m8 { width: 28px; }
.m9 { width: 68px; }

/* toolbar */
.toolbar {
    display: flex;
    height: 39px;
    background: #565a5e;
    border-bottom: 1px solid #45494b;
}
.param {
    display: flex;
    justify-content: space-between;
    width: 172px;
    height: 32px;
    margin-top: 3px;
    padding: 4px 10px 0 43px;
    background: #181c1f;
    color: #85898b;
    letter-spacing: 0.7px;
    clip-path: polygon(0 0, 94% 0, 100% 100%, 0 100%);
}
.param svg {
    margin-top: 16px;
    color: #ccc;
}
.tools {
    display: flex;
    align-items: center;
    width: 275px;
    border-right: 1px solid #44484c;
}
.bracket {
    margin: 0 4px 0 16px;
}
.tools.second {
    width: 174px;
    padding-left: 10px;
    border: 0;
}
.tool {
    display: flex;
    align-items: center;
    justify-content: center;
    width: 30px;
    height: 39px;
    flex: none;
}
.corner {
    background: linear-gradient(135deg, transparent 50%, #888c8f 50%) 24px 29px / 5px 5px no-repeat;
}
.on.tool {
    background: #3a95d0;
}
.help {
    font-size: 19px;
    color: #fff;
}
.iq {
    font-size: 13px;
    color: #fff;
}
.quant {
    display: flex;
    width: 234px;
    background: #4a4f50;
    color: #c4c7c8;
}
.quant label {
    display: block;
    height: 19px;
    line-height: 20px;
}
.quant p {
    display: flex;
    align-items: center;
    justify-content: space-between;
    height: 17px;
    color: #eee;
}
.quant svg {
    color: #888;
}
.q1 { width: 64px; margin-left: 7px; }
.q2 { width: 71px; margin-left: 12px; }
.q2 label { letter-spacing: -0.2px; }
.q2 p { width: 65px; }
.q3 { width: 66px; margin-left: 5px; }
.snaps {
    display: flex;
    align-items: center;
    gap: 13px;
    width: 77px;
    padding-left: 6px;
    background: #454a4b;
}
.pages {
    display: flex;
    flex: 1;
    background: #5c6165;
}
.drop {
    display: flex;
    align-items: center;
    justify-content: center;
    width: 75px;
    padding-left: 43px;
    border-right: 1px solid #54595c;
}
.page {
    display: flex;
    align-items: center;
    justify-content: center;
    gap: 9px;
    border-right: 1px solid #484c50;
    letter-spacing: 0.3px;
}
.page:last-child { border: 0; }
.p1 { width: 57px; }
.p2 { width: 73px; }
.p3 { width: 74px; }

/* main area */
.main {
    display: flex;
    height: 565px;
    padding-top: 5px;
}
.inspector {
    width: 180px;
    padding-left: 3px;
    flex: none;
}
.insp-head {
    display: flex;
    align-items: center;
    height: 28px;
    padding-left: 4px;
    background: #26292b;
    color: #9a9c9d;
}
.insp-head b {
    margin-left: 15px;
    font-size: 17px;
    color: #fff;
}
.insp-track {
    display: flex;
    align-items: center;
    height: 27px;
    margin-top: 1px;
    border-bottom: 1px solid #1c1f21;
    background: #4f5355;
    color: #e2e2e2;
}
.insp-track i {
    width: 9px;
    height: 100%;
    background: #14a9d2;
}
.insp-track b {
    width: 25px;
    line-height: 26px;
    text-align: center;
    background: #3b3e40;
}
.insp-track span {
    flex: 1;
    margin-left: 6px;
}
.insp-track svg {
    margin-right: 6px;
}
.insp-row {
    display: flex;
    height: 22.6px;
    background: #25282a;
    line-height: 22px;
}
.insp-row label {
    width: 84px;
    padding-left: 4px;
}
.insp-row p {
    display: flex;
    flex: 1;
    align-items: center;
    justify-content: center;
    border-bottom: 1px solid #25282a;
    background: #303335;
    padding-right: 12px;
}
.insp-row p svg {
    margin: 0 -19px 0 12px;
    color: #777;
}
.insp-row:nth-child(5) p svg { margin: 0 -29px 0 22px; }
.insp-channel {
    display: flex;
    height: 328px;
    margin-top: 7px;
    border-top: 2px solid #2ba2b8;
    background: #277b90;
}
.insp-channel .strip-body {
    width: 77px;
    height: 326px;
    border-right: 1px solid #10353f;
    padding-top: 7px;
}
.insp-name {
    height: 13px;
    line-height: 13px;
    background: #14a9da;
    color: #dff;
    text-align: center;
}
.insp-event {
    height: 26px;
    margin-top: 4px;
    line-height: 27px;
    background: #484b4d;
    text-align: center;
    letter-spacing: 0.3px;
}
.insp-empty {
    height: 57px;
    background: #26292c;
}

/* channel parts used by inspector and mixer */
.strip-body {
    padding: 6px 5px 0;
}
.route {
    height: 32px;
    background: #37707b;
    line-height: 16px;
    text-align: center;
    color: #dde6e8;
}
.route span {
    display: block;
    height: 16px;
}
.pan {
    display: flex;
    justify-content: center;
    height: 16px;
    background: #222a2e;
}
.pan i {
    width: 3px;
    height: 15px;
    background: #4a9fd4;
}
.vals {
    display: flex;
    height: 23px;
    line-height: 21px;
    text-align: center;
    color: #e0f2f5;
}
.vals span, .ms span, .arm span {
    flex: 1;
}
.ms {
    display: flex;
    height: 19px;
    margin: 0 1px;
    line-height: 19px;
    text-align: center;
    font-size: 12px;
    background: #2a6878;
    color: #c4d4d8;
}
.ms span + span {
    border-left: 1px solid #1c4f5c;
}
.arm {
    display: flex;
    height: 18px;
    margin: 0 1px;
}
.arm span, .btns span {
    display: flex;
    align-items: center;
    justify-content: center;
}
.rec {
    background: #e0455c;
}
.rec i {
    width: 9px;
    height: 9px;
    border-radius: 50%;
    background: #fff3e8;
}
.mon {
    background: #5fb9c2;
    border-left: 1px solid #2a5c66;
}
.fader {
    margin-left: -5px;
}
.scale {
    font-size: 7px;
    font-weight: bold;
    text-anchor: end;
    fill: #c2dce2;
}
.num {
    display: flex;
    align-items: center;
    justify-content: space-between;
    height: 18px;
    padding: 0 2px 0 8px;
    color: #e4f1f4;
}
.num.mid {
    justify-content: center;
    padding: 0;
}
.auto {
    height: 16px;
    margin: 1px 1px 0 0;
    line-height: 16px;
    text-align: center;
    font-size: 10px;
    letter-spacing: 0.2px;
    background: #174651;
    color: #68838a;
}
.fx {
    flex: 1;
}
.fx-head {
    display: flex;
    align-items: center;
    height: 19px;
    padding-left: 3px;
    background: #393c3e;
    color: #666;
}
.fx-head span {
    flex: 1;
    margin-left: 2px;
    color: #ccd0d2;
}
.fx-head svg:last-child {
    margin: 0 4px 0 5px;
    color: #888;
}
.fx-head svg:nth-child(3) {
    color: #808486;
}
.fx-head.on svg:first-child {
    color: #3f9ad8;
}
.fx-slot {
    display: flex;
    align-items: center;
    height: 18px;
    margin-top: 1px;
    padding-left: 3px;
    background: #494d4f;
    font-size: 10px;
}
.fx-slot span {
    margin-left: 3px;
}
.fx-slot svg {
    color: #5aa9c4;
}
.insp-channel .fx-head {
    margin-top: 2px;
}
.insp-channel .sends {
    margin-top: 199px;
}

/* track list */
.work {
    flex: 1;
    min-width: 0;
    padding-left: 3px;
}
.arrange {
    display: flex;
    height: 151px;
}
.tracks {
    width: 240px;
    flex: none;
    padding-left: 1px;
    border-right: 2px solid #6f7375;
}
.tracks-head {
    display: flex;
    align-items: center;
    height: 28px;
    padding: 0 7px;
    background: #292c2e;
    color: #bbb;
}
.tracks-head svg + svg {
    margin-left: 9px;
}
.tracks-head svg.push {
    margin-left: auto;
}
.tracks-head svg:last-child {
    margin-left: 12px;
}
.track-view {
    height: 103px;
    overflow: hidden;
    background: #35393b;
}
.track {
    display: flex;
    height: 56px;
    width: 228px;
    border-bottom: 1px solid #12303a;
    color: #b9c4cd;
}
.track.midi {
    margin-top: -9px;
    background: #1f3355;
}
.track.audio {
    background: #247b90;
    color: #dcecf0;
}
.color {
    display: flex;
    align-items: flex-end;
    width: 9px;
    padding-bottom: 2px;
    background: #0a60dc;
}
.audio .color {
    background: #14a9d6;
}
.track > b {
    width: 24px;
    line-height: 26px;
    text-align: center;
    font-size: 10px;
}
.track-top {
    display: flex;
    align-items: center;
    height: 18px;
    margin-top: 4px;
    width: 188px;
}
.btns {
    display: flex;
    width: 88px;
    height: 18px;
    background: #293c58;
    font-size: 12px;
}
.audio .btns {
    background: #256878;
}
.btns span {
    width: 22px;
}
.name {
    flex: 1;
    margin-left: 5px;
    letter-spacing: 0.2px;
}
.rail {
    width: 122px;
    height: 3px;
    margin-top: 6px;
    background: linear-gradient(#1b4b5c, #1b4b5c) 0 1px / 100% 1px no-repeat;
}
.midi .rail {
    background: none;
}
.rail i {
    display: block;
    width: 92px;
    height: 3px;
    background: #b4c8d0;
}
.midi .rail i {
    background: #8592a4;
}
.track-in {
    display: flex;
    align-items: center;
    gap: 2px;
    height: 17px;
    margin-top: 5px;
}
.track-in p {
    display: flex;
    align-items: center;
    height: 16px;
    padding: 0 2px;
}
.in1, .in2 {
    background: #2b3b58;
    color: #909bac;
}
.in1 { width: 65px; gap: 3px; }
.in1 span { width: 40px; }
.in1 svg:last-child { margin-left: -3px; }
.in2 { width: 55px; justify-content: space-between; }
.track-in .in2 { padding-right: 5px; }
.in3 { width: 100px; justify-content: space-between; }
.track-in .in3 { padding-right: 6px; }
.ring {
    width: 9px;
    height: 9px;
    margin-left: 5px;
    border: 2px solid #dcecf0;
    border-radius: 50%;
}
.tracks-foot {
    display: flex;
    align-items: center;
    height: 17px;
    margin-top: 1px;
    padding-left: 18px;
    background: #1f2224;
    font-size: 9px;
}
.tracks-foot span { width: 46px; }
.tracks-foot svg { color: #4a9fd4; margin-left: -2px; }
.tracks-foot .mode { width: 50px; margin-left: 35px; font-size: 9.5px; }
.tracks-foot .mode + svg { color: #888; margin-left: 0; }
.tracks-foot svg:last-child { color: #666; margin-left: 15px; }

/* timeline */
.timeline {
    flex: 1;
    min-width: 0;
}
.ruler {
    height: 30px;
    border-top: 5px solid #393c3e;
    background: #292c2e;
}
.marks {
    display: flex;
    height: 19px;
    overflow: hidden;
    line-height: 17px;
    font-size: 9.5px;
    color: #b4b6b7;
}
.marks span, .marks b {
    width: 56.15px;
    flex: none;
    padding-left: 1px;
}
.marks b {
    padding: 0;
    font-size: 10.5px;
    font-weight: normal;
}
.ticks {
    height: 6px;
    background:
        repeating-linear-gradient(90deg, #ccc 0 1.5px, transparent 1.5px 224.6px),
        repeating-linear-gradient(90deg, #999 0 1px, transparent 1px 56.15px) 0 2px / 100% 4px no-repeat,
        repeating-linear-gradient(90deg, #aaa 0 1px, #0b0c0d 1px 14.037px) 0 4px / 100% 2px no-repeat;
}
.lanes-row {
    display: flex;
    height: 101px;
}
.lanes {
    width: 830px;
}
.lane {
    height: 57px;
    background: repeating-linear-gradient(90deg, #333839 0 1px, transparent 1px 56.15px) #272d2f;
}
.l1 {
    height: 44px;
    background: repeating-linear-gradient(90deg, #2c3131 0 1px, transparent 1px 56.15px) #1e2223;
}
.vscroll {
    display: flex;
    flex: 1;
    flex-direction: column;
    align-items: center;
    padding: 3px 1px 6px 0;
    background: #232628;
    color: #666;
}
.vscroll i {
    width: 5px;
    height: 48px;
    margin: 12px 0 auto;
    background: #5f6264;
}
.hscroll {
    display: flex;
    align-items: center;
    gap: 5px;
    height: 17px;
    margin-top: 1px;
    padding: 0 4px 0 6px;
    background: #26292b;
    color: #666;
}
.thumb {
    width: 13px;
    height: 5px;
    margin-left: 5px;
    background: #606365;
}
.z1 {
    margin-left: 6px;
}
.hscroll svg:last-child {
    margin-left: 3px;
}

/* console */
.console {
    display: flex;
    height: 409px;
    border: 1px solid #397682;
    border-top-width: 2px;
    background: #25282b;
    padding-top: 2px;
}
.con-tools {
    display: flex;
    flex-direction: column;
    flex: none;
    width: 53px;
    border-right: 1px solid #16181a;
}
.ct {
    display: flex;
    align-items: center;
    justify-content: center;
    height: 20.7px;
    flex: none;
    border-bottom: 1px solid #26292b;
    background: #35383a;
}
.ct.head { height: 20px; gap: 20px; background: #3a3d3f; }
.ct.io { height: 21px; gap: 15px; padding-left: 5px; }
.ct.wr { height: 21px; color: #ccc; }
.ct.tall { height: 25px; }
.ct.mid { height: 23px; }
.ct.on {
    background: #318ac6;
    color: #e8f4fb;
}
.chan-list {
    display: flex;
    flex-direction: column;
    flex: none;
    width: 187px;
    border-right: 2px solid #131618;
}
.cl-head, .in-head {
    display: flex;
    align-items: center;
    height: 19px;
    background: #404345;
}
.c1 {
    width: 65px;
    margin-left: 81px;
}
.cl-row {
    display: flex;
    align-items: center;
    height: 19px;
    background: #1f2225;
}
.cl-row.sel {
    background: #47494c;
}
.cl-row .n {
    width: 41px;
    padding-right: 10px;
    text-align: right;
    border-right: 1px solid #33373a;
}
.dot {
    width: 6px;
    height: 6px;
    margin: 0 7px 0 5px;
    border-radius: 50%;
    background: #eee;
}
.sw {
    width: 6px;
    height: 19px;
    margin: 0 12px 0 3px;
}
.sw.blue { background: #1b5fd0; }
.sw.cyan { background: #17a8d0; }
.filter {
    display: flex;
    align-items: center;
    justify-content: space-between;
    width: 174px;
    height: 19px;
    margin: 0 0 6px 6px;
    padding: 0 4px 0 65px;
    border: 1px solid #191c1e;
    background: #222528;
    color: #707476;
}
.kinds {
    display: flex;
    height: 20px;
    background: #303335;
    font-size: 10px;
    color: #686b6d;
}
.kinds span {
    display: flex;
    align-items: center;
    justify-content: center;
    width: 22px;
    border-right: 1px solid #26292b;
}
.kinds .on {
    background: #318ac6;
    color: #fff;
}
.kinds .remote {
    flex: 1;
    margin-left: 3px;
    font-size: 11px;
    color: #d2d4d5;
}
.instruments {
    display: flex;
    flex-direction: column;
    flex: none;
    width: 165px;
}
.in-head, .in-row {
    padding: 0 3px 0 4px;
}
.in-head span, .in-row span {
    flex: 1;
}
.in-head svg:last-child {
    margin-left: 7px;
}
.in-row {
    display: flex;
    align-items: center;
    height: 19px;
    background: #1f2225;
    color: #3f95c4;
}
.in-row span {
    margin-left: 4px;
    color: #d2d4d5;
}
.in-row svg:last-child {
    margin-right: 2px;
    color: #888;
}
.in-foot {
    display: flex;
    align-items: center;
    justify-content: flex-end;
    gap: 18px;
    height: 14px;
    padding-right: 10px;
}
.in-foot i {
    width: 15px;
    height: 2px;
    margin-top: 2px;
    background: #999;
}
.in-foot em {
    width: 15px;
    height: 6px;
    border: 1px solid #666;
    border-top-width: 2px;
}
.mixer {
    flex: 1;
    min-width: 0;
}
.strips {
    display: flex;
    gap: 2px;
    height: 387px;
    padding-left: 1px;
    background: linear-gradient(90deg, #0d1114 155px, transparent 155px);
}
.strip {
    width: 76px;
    flex: none;
}
.strip .fx {
    height: 93px;
    border-top: 2px solid #277ab8;
    border-bottom: 2px solid #0c1013;
}
.strip .fx-head {
    height: 18px;
}
.strip .sends {
    margin-top: 34px;
    border-top: 1px solid #0e161f;
    height: 19px;
}
.strip .fx-slot + .sends {
    margin-top: 15px;
}
.strip .strip-body {
    border-top: 2px solid #2aa6bb;
    height: 280px;
}
.strip-name {
    height: 14px;
    line-height: 14px;
    text-align: center;
}
.teal .fx, .teal .strip-body { background: #2a8398; }
.teal .strip-name { background: #18abd0; color: #dff; }
.teal .fx { border-top-color: #2aa6bb; }
.blue .fx, .blue .strip-body { background: #203555; }
.blue .fx { border-top-color: #1b56b8; }
.strip.blue .strip-body { border-top-color: #1b56b8; }
.blue .fx-head { background: #23364f; }
.blue .strip-name { background: #1058dc; color: #fff; }
.blue .route { background: #363d49; color: #d9d36e; }
.blue .ms { background: #273850; }
.blue .ms span + span { border-color: #17263c; }
.blue .auto { background: #14202e; color: #626b76; }
.master {
    width: 77px;
    border-left: 1px solid #15181a;
    background: #2a2d2f;
}
.master .fx { border-top-color: #1a1d20; }
.strip.master .strip-body { border-top-color: #424547; background: #2e3133; }
.master .fx-head { background: #2e3133; }
.master .route { background: #2a2d2f; }
.master .route span + span { background: #3a3d3f; }
.master .route span:first-child { border: 1px solid #222527; }
.master .peaks { background: #202325; color: #777; font-size: 9px; justify-content: space-around; line-height: 16px; }
.master .dim { color: #555; }
.master .ms { background: #333638; }
.master .ms span + span { border-color: #222; }
.master .arm { background: #2a2d2f; color: #aaa; }
.master .arm .metro { flex: 0 0 23px; background: #4b93ae; }
.master .arm .pin { flex: 0 0 17px; }
.master .auto { background: #202325; color: #666; }
.master .strip-name { background: #131517; color: #eee; }
.master .scale { fill: #ccc; }
.mix-scroll {
    display: flex;
    align-items: center;
    justify-content: space-between;
    height: 16px;
    padding: 0 84px 0 7px;
    color: #54585b;
}

/* transport */
.transport {
    display: flex;
    height: 45px;
    padding-top: 1px;
    background: #5a5e62;
    border-bottom: 6px solid #484c4e;
}
.tp {
    display: flex;
    align-items: center;
    width: 1096px;
    height: 39px;
    background: #101314;
    clip-path: polygon(15px 0, 100% 0, 1085px 100%, 22px 100%);
}
.tp span {
    font-size: 9.5px;
    color: #8a8d8f;
}
.tp .midi, .perf, .time, .metro-box, .val {
    display: flex;
    flex-direction: column;
    align-items: center;
    flex: none;
}
.tp .midi {
    width: 30px;
    margin-left: 51px;
    gap: 3px;
}
.perf {
    width: 62px;
    margin-left: 5px;
    padding-top: 3px;
}
.perf i {
    width: 59px;
    height: 4px;
    margin-bottom: 2px;
    background: #2b2f30;
    border-left: 1px solid #666;
}
.perf span {
    margin-top: 2px;
    letter-spacing: 0.25px;
}
.spin {
    margin-left: 17px;
}
.time {
    width: 128px;
    margin-left: 23px;
}
.time b {
    font-size: 17px;
    line-height: 17px;
    letter-spacing: 0.38px;
    color: #d8dadb;
}
.time span {
    display: flex;
    align-items: center;
    line-height: 12px;
    letter-spacing: 0.6px;
}
.ctl {
    display: flex;
    align-items: center;
    margin-left: 17px;
    fill: #c4c6c7;
    color: #c4c6c7;
}
.k1 { margin-right: 11px; }
.k2 { margin-right: 13px; }
.k3 { margin-right: 9px; }
.k4 { margin-right: 13px; }
.k5 { margin-right: 19px; }
.k6 { margin-right: 18px; }
.k7 { margin-right: 13px; }
.k8 { margin-right: 14px; }
.loc {
    margin-left: 17px;
    width: 101px;
    font-size: 12px;
    line-height: 14px;
    color: #d2d4d5;
}
.loc em {
    display: inline-block;
    width: 14px;
    font-size: 10px;
    color: #666;
}
.opts {
    display: grid;
    grid-template-columns: 16px 16px;
    gap: 5px 8px;
    align-items: center;
    justify-items: center;
    margin-left: 18px;
}
.metro-box {
    width: 56px;
    margin-left: 9px;
    gap: 5px;
    padding-top: 2px;
    color: #888;
}
.metro-box div {
    display: flex;
    align-items: center;
    gap: 9px;
}
.val {
    padding-top: 2px;
}
.val b {
    font-size: 12px;
    line-height: 15px;
    font-weight: normal;
    color: #d8dadb;
}
.val span {
    line-height: 15px;
}
.v1 { width: 40px; margin-left: 10px; }
.v2 { width: 44px; margin-left: 9px; }
.levels {
    width: 63px;
    margin-left: 12px;
}
.levels i, .levels em {
    display: block;
    height: 8px;
    background: #272a2b;
}
.levels em {
    margin-top: 7px;
    background: repeating-linear-gradient(90deg, #14252b 0 1px, transparent 1px 3px) 0 0 / 47px 8px no-repeat, linear-gradient(90deg, #57a5bd 47px, #272a2b 47px);
}
.st {
    margin: 17px 0 0 7px;
    color: #50b5c5;
}
.views {
    display: flex;
    flex: 1;
    line-height: 49px;
    text-align: center;
    letter-spacing: 0.2px;
}
.e1 { width: 55px; margin-left: 8px; border-left: 1px solid #4b4f52; }
.e2 { width: 51px; height: 43px; background: #3a95d0; color: #fff; }
.e3 { flex: 1; }

/* taskbar */
.taskbar {
    display: flex;
    align-items: center;
    height: 31px;
    background: #222528;
    color: #f2f2f2;
    font-family: "Open Sans", sans-serif;
    font-size: 11px;
}
.win {
    margin-left: 9px;
}
.task {
    display: flex;
    align-items: center;
    gap: 5px;
    height: 31px;
    padding: 3px 0 0 5px;
    border-bottom: 2px solid #70a9dc;
    flex: none;
}
.videos { width: 137px; margin-left: 15px; letter-spacing: -0.1px; }
.quick {
    display: flex;
    width: 447px;
    margin-left: 4px;
    padding-top: 1px;
}
.quick span {
    display: flex;
    align-items: center;
    justify-content: center;
    width: 34.4px;
}
.sb {
    font: bold 14px/16px "Liberation Sans", sans-serif;
    background: linear-gradient(90deg, #e7f5fb 50%, #258abf 50%) no-repeat 9px 0 / 16px 16px;
    color: #38a5d5;
}
.wd i {
    width: 15px;
    height: 14px;
    background: #2667b8;
    border-top: 3px solid #5ba0e0;
    font: bold 9px/11px "Liberation Sans", sans-serif;
    text-align: center;
}
.studio { width: 144px; padding-left: 8px; background: #4a4d4f; letter-spacing: -0.12px; }
.loop { width: 136px; margin-left: 4px; letter-spacing: -0.1px; }
.obs { width: 136px; margin-left: 8px; padding-left: 4px; gap: 4px; font-size: 10.5px; }
.tray {
    display: flex;
    align-items: center;
    padding-top: 1px;
}
.tray path {
    fill: none;
    stroke: #eee;
}
.tray .note path:first-child {
    fill: #fff;
    stroke: none;
}
.tray .note path + path {
    stroke: #333;
}
.t1 { margin: 0 9px 0 12px; }
.t2 { margin-right: 10px; }
.t3 { margin-right: 8px; }
.t4 { margin-right: 14px; }
.lang { width: 32px; font-size: 10px; }
.clock { width: 41px; }

/* mouse pointer over the console */
.cursor {
    position: absolute;
    left: 555px;
    top: 515px;
}
/* sprite takes no room */
.defs {
    position: absolute;
}
```
